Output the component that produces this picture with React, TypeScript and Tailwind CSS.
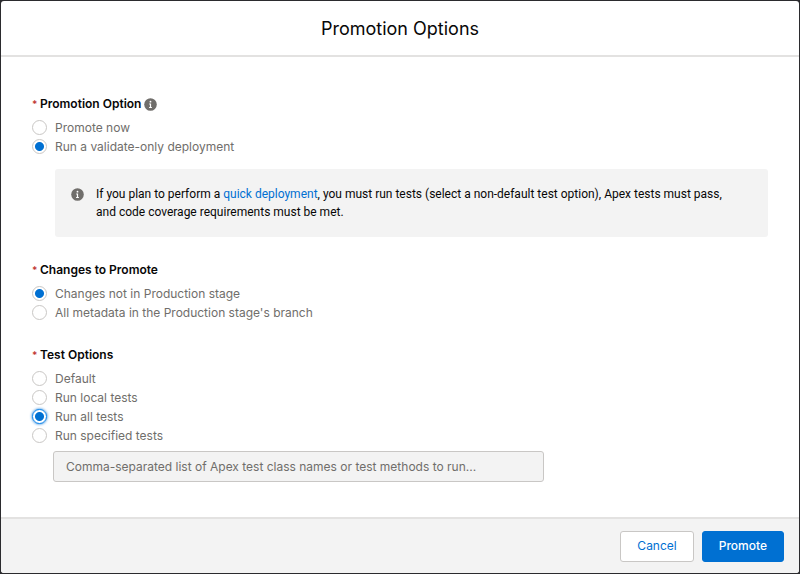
import type { ReactNode } from "react";

function InfoIcon() {
  return (
    <svg viewBox="0 0 13 13" className="size-[13px] shrink-0" aria-hidden="true">
      <circle cx="6.5" cy="6.5" r="6.3" fill="#706e6b" />
      <circle cx="6.5" cy="3.7" r="0.9" fill="#fff" />
      <path d="M5.2 5.6h1.9v3.5h.8v.9H5.1v-.9h.8V6.5h-.7z" fill="#fff" />
    </svg>
  );
}

type GroupProps = {
  label: string;
  info?: boolean;
  children: ReactNode;
};

function Group({ label, info, children }: GroupProps) {
  return (
    <fieldset>
      <legend className="mb-[5px] flex items-center text-[12px] leading-[18px] font-semibold text-[#080707]">
        <span className="w-2 text-[10px] text-[#c23934]">*</span>
        {label}
        {info && (
          <span className="ml-[3px]">
            <InfoIcon />
          </span>
        )}
      </legend>
      {children}
    </fieldset>
  );
}

type OptionProps = {
  name: string;
  label: string;
  checked?: boolean;
  focused?: boolean;
};

function Option({ name, label, checked, focused }: OptionProps) {
  return (
    <label className="flex h-[19px] items-center gap-2 text-[12px] text-[#706e6b]">
      <input
        type="radio"
        name={name}
        defaultChecked={checked}
        className={`size-[15px] shrink-0 appearance-none rounded-full border bg-white checked:bg-[radial-gradient(circle,#0070d2_0_4px,#fff_5px)] ${
          focused
            ? "border-[#1589ee] shadow-[0_0_3px_#0070d2]"
            : "border-[#c9c7c5]"
        }`}
      />
      {label}
    </label>
  );
}

export default function App() {
  return (
    <div className="min-h-screen bg-[#2b2b2e] p-px font-[Inter,sans-serif]">
      <div className="flex min-h-[calc(100vh-2px)] flex-col overflow-hidden rounded-[3px] bg-white">
        <header className="flex h-14 items-center justify-center border-b-2 border-[#e3e2e1]">
          <h1 className="text-[18px] text-[#080707]">Promotion Options</h1>
        </header>

        <main className="flex grow flex-col gap-6 px-[31px] pt-[38px]">
          <Group label="Promotion Option" info>
            <Option name="promotion" label="Promote now" />
            <Option name="promotion" label="Run a validate-only deployment" checked />
            <div className="mt-[13px] ml-[23px] flex gap-3 rounded-[3px] bg-[#f3f3f3] py-4 pr-7 pl-4 font-[Roboto,sans-serif] text-[12px] leading-[18px] text-[#080707]">
              <span className="pt-[3px]">
                <InfoIcon />
              </span>
              <p>
                If you plan to perform a{" "}
                <a href="#" className="text-[#0070d2]">
                  quick deployment
                </a>
                , you must run tests (select a non-default test option), Apex
                tests must pass, and code coverage requirements must be met.
              </p>
            </div>
          </Group>

          <Group label="Changes to Promote">
            <Option name="changes" label="Changes not in Production stage" checked />
            <Option name="changes" label="All metadata in the Production stage's branch" />
          </Group>

          <Group label="Test Options">
            <Option name="tests" label="Default" />
            <Option name="tests" label="Run local tests" />
            <Option name="tests" label="Run all tests" checked focused />
            <Option name="tests" label="Run specified tests" />
            <input
              type="text"
              disabled
              aria-label="Specified tests"
              placeholder="Comma-separated list of Apex test class names or test methods to run..."
              className="mt-[6px] ml-[21px] block h-[31px] w-2/3 rounded-[3px] border border-[#c9c7c5] bg-[#f3f3f3] px-3 text-[12px] placeholder:text-[#706e6b]"
            />
          </Group>
        </main>

        <footer className="flex h-14 items-center justify-end gap-2 border-t-2 border-[#e3e2e1] bg-[#f3f3f3] px-[15px]">
          <button className="h-[31px] rounded-[3px] border border-[#c9c7c5] bg-white px-4 text-[12px] text-[#0070d2]">
            Cancel
          </button>
          <button className="h-[31px] rounded-[3px] border border-[#0070d2] bg-[#0070d2] px-4 text-[12px] font-medium text-white">
            Promote
          </button>
        </footer>
      </div>
    </div>
  );
}
